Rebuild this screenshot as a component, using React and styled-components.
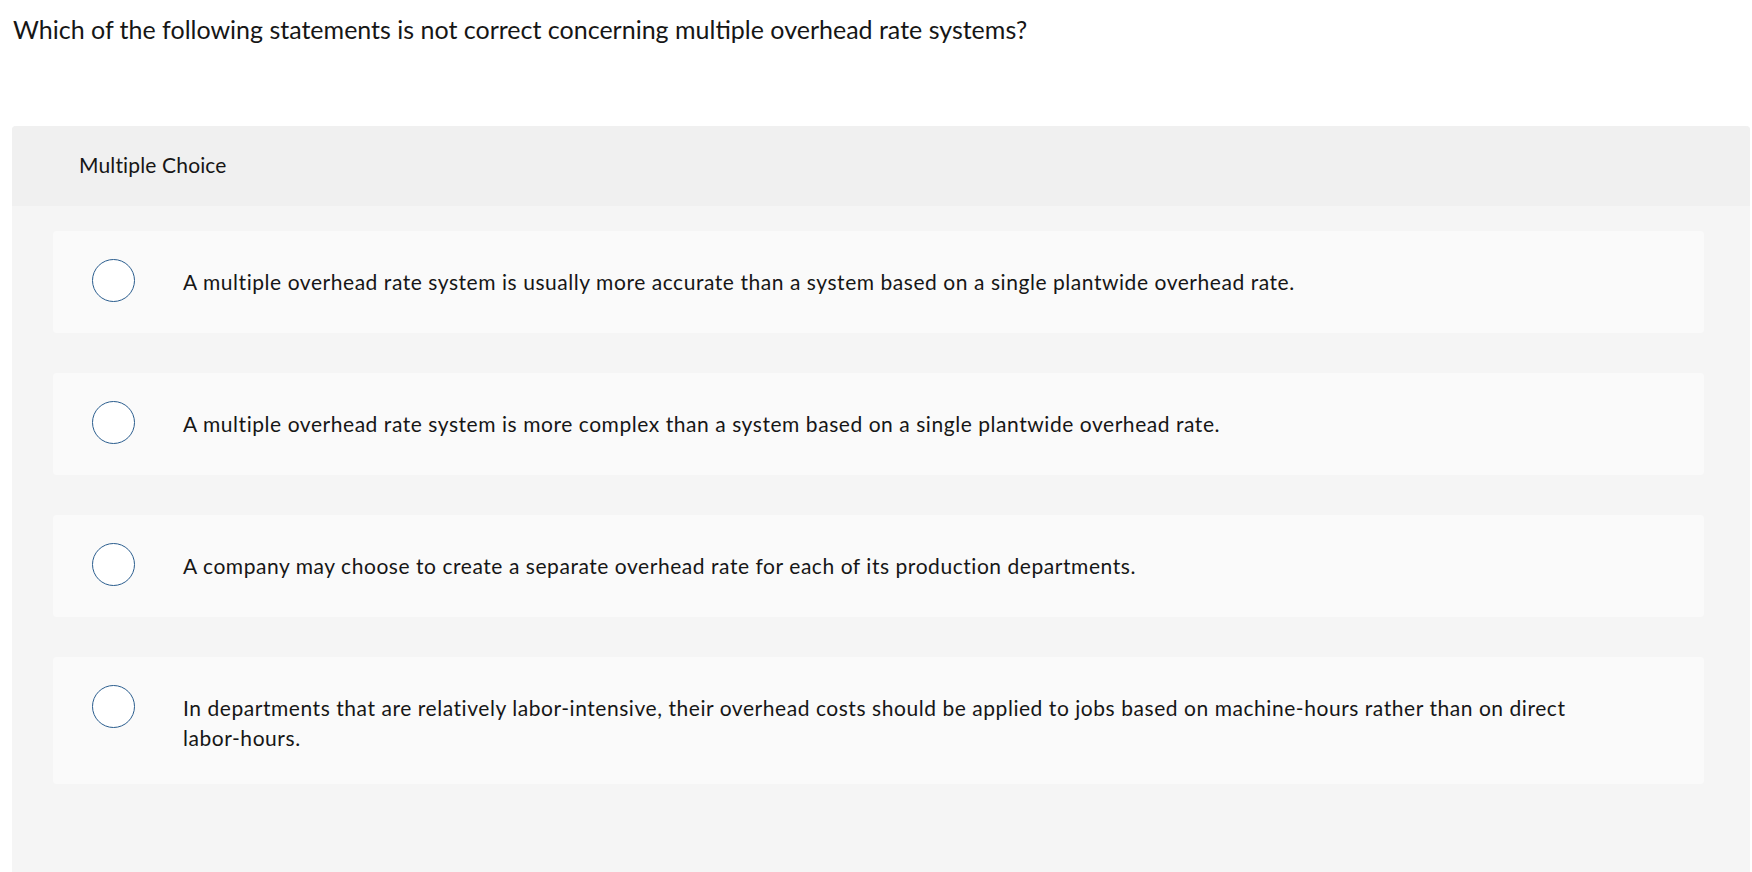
import styled, { createGlobalStyle } from "styled-components";

const GlobalStyle = createGlobalStyle`
  body {
    margin: 0;
    background: #ffffff;
    font-family: Lato, "Liberation Sans", sans-serif;
    color: #161616;
  }
`;

const options = [
  "A multiple overhead rate system is usually more accurate than a system based on a single plantwide overhead rate.",
  "A multiple overhead rate system is more complex than a system based on a single plantwide overhead rate.",
  "A company may choose to create a separate overhead rate for each of its production departments.",
  "In departments that are relatively labor-intensive, their overhead costs should be applied to jobs based on machine-hours rather than on direct labor-hours.",
];

function App() {
  return (
    <>
      <GlobalStyle />
      <Page>
        <Question>
          Which of the following statements is not correct concerning multiple
          overhead rate systems?
        </Question>
        <Panel>
          <PanelHeader>Multiple Choice</PanelHeader>
          <PanelBody>
            {options.map((text, i) => (
              <Choice key={i}>
                <Radio />
                <ChoiceText>{text}</ChoiceText>
              </Choice>
            ))}
          </PanelBody>
        </Panel>
      </Page>
    </>
  );
}

const Page = styled.div`
  padding: 0 2px 0 12px;
`;

const Question = styled.p`
  margin: 0;
  padding: 14px 0 0 1px;
  height: 112px;
  font-size: 25px;
  line-height: 30px;
`;

const Panel = styled.div`
  background: #f5f5f5;
  border-radius: 4px 4px 0 0;
  min-height: 760px;
  overflow: hidden;
`;

const PanelHeader = styled.div`
  display: flex;
  align-items: center;
  height: 80px;
  padding: 0 0 3px 67px;
  box-sizing: border-box;
  background: #f0f0f0;
  font-size: 21px;
  letter-spacing: 0.15px;
`;

const PanelBody = styled.div`
  display: flex;
  flex-direction: column;
  gap: 40px;
  padding: 25px 46px 0 41px;
`;

const Choice = styled.div`
  display: flex;
  align-items: flex-start;
  gap: 48px;
  padding: 28px 110px 31px 39px;
  background: #fafafa;
  border-radius: 4px;
`;

const Radio = styled.span`
  flex: none;
  width: 43px;
  height: 43px;
  box-sizing: border-box;
  border: 1px solid #2a5d8e;
  border-radius: 50%;
  background: #ffffff;
`;

const ChoiceText = styled.div`
  padding-top: 8px;
  font-size: 21px;
  line-height: 30px;
  letter-spacing: 0.55px;
`;

export default App;
